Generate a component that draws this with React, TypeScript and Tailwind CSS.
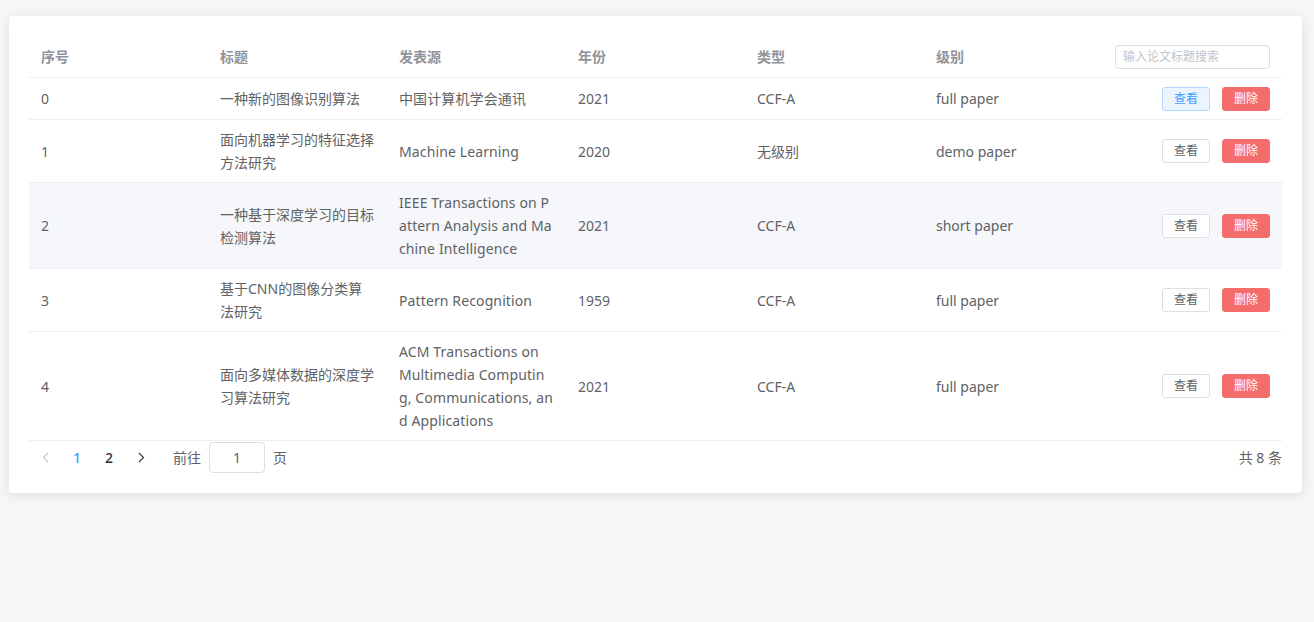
import React from "react";

const rows = [
  { id: 0, title: "一种新的图像识别算法", source: "中国计算机学会通讯", year: "2021", type: "CCF-A", level: "full paper" },
  { id: 1, title: "面向机器学习的特征选择方法研究", source: "Machine Learning", year: "2020", type: "无级别", level: "demo paper" },
  { id: 2, title: "一种基于深度学习的目标检测算法", source: "IEEE Transactions on Pattern Analysis and Machine Intelligence", year: "2021", type: "CCF-A", level: "short paper" },
  { id: 3, title: "基于CNN的图像分类算法研究", source: "Pattern Recognition", year: "1959", type: "CCF-A", level: "full paper" },
  { id: 4, title: "面向多媒体数据的深度学习算法研究", source: "ACM Transactions on Multimedia Computing, Communications, and Applications", year: "2021", type: "CCF-A", level: "full paper" },
];

const headers = ["序号", "标题", "发表源", "年份", "类型", "级别"];

const Chevron = ({ dir, color }: { dir: "left" | "right"; color: string }) => (
  <svg width="7" height="11" viewBox="0 0 7 11" fill="none">
    <path
      d={dir === "left" ? "M6 1 L1.5 5.5 L6 10" : "M1 1 L5.5 5.5 L1 10"}
      stroke={color}
      strokeWidth="1.1"
    />
  </svg>
);

export default function App() {
  return (
    <div
      className="min-h-[622px] bg-[#f5f6f7] pt-4 px-[9px] pb-4 text-[14px] text-[#606266]"
      style={{ fontFamily: '"Noto Sans", "Noto Sans CJK SC", sans-serif' }}
    >
      <div className="w-[1293px] rounded bg-white p-5 shadow-[0_2px_12px_0_rgba(0,0,0,0.1)]">
        <table className="w-[1253px] table-fixed border-collapse">
          <colgroup>
            {Array.from({ length: 7 }).map((_, i) => (
              <col key={i} className="w-[179px]" />
            ))}
          </colgroup>
          <thead>
            <tr className="border-b border-[#ebeef5]">
              {headers.map((h) => (
                <th key={h} className="px-3 py-2 text-left font-bold text-[#909399] leading-[25px]">
                  {h}
                </th>
              ))}
              <th className="px-3 py-2">
                <div className="flex h-[25px] items-center justify-end">
                  <input
                    placeholder="输入论文标题搜索"
                    className="h-6 w-[155px] rounded border border-[#dcdfe6] px-[7px] text-[12px] font-normal text-[#606266] outline-none placeholder:text-[#c0c4cc]"
                  />
                </div>
              </th>
            </tr>
          </thead>
          <tbody>
            {rows.map((r) => (
              <tr
                key={r.id}
                className={`border-b border-[#ebeef5] ${r.id === 2 ? "bg-[#f5f7fa]" : ""}`}
              >
                <td className="px-3 py-2 align-middle leading-[23px]">{r.id}</td>
                <td className="px-3 py-2 align-middle leading-[23px] break-all">{r.title}</td>
                <td className="px-3 py-2 align-middle leading-[23px] break-all tracking-[0.12px]">{r.source}</td>
                <td className="px-3 py-2 align-middle leading-[23px]">{r.year}</td>
                <td className="px-3 py-2 align-middle leading-[23px]">{r.type}</td>
                <td className="px-3 py-2 align-middle leading-[23px]">{r.level}</td>
                <td className="px-3 py-2 align-middle">
                  <div className="flex h-[25px] items-center justify-end gap-3">
                    <button
                      className={`h-6 w-12 rounded-[3px] border text-[12px] leading-none ${
                        r.id === 0
                          ? "border-[#b3d8ff] bg-[#ecf5ff] text-[#409eff]"
                          : "border-[#dcdfe6] bg-white text-[#606266]"
                      }`}
                    >
                      查看
                    </button>
                    <button className="h-6 w-12 rounded-[3px] border border-[#f56c6c] bg-[#f56c6c] text-[12px] leading-none text-white">
                      删除
                    </button>
                  </div>
                </td>
              </tr>
            ))}
          </tbody>
        </table>

        {/* pagination */}
        <div className="flex h-8 w-[1253px] items-center">
          <div className="flex w-8 items-center justify-center">
            <Chevron dir="left" color="#c0c4cc" />
          </div>
          <div className="flex w-8 items-center justify-center font-medium text-[#409eff]">1</div>
          <div className="flex w-8 items-center justify-center font-medium text-[#303133]">2</div>
          <div className="flex w-8 items-center justify-center">
            <Chevron dir="right" color="#303133" />
          </div>
          <span className="ml-4">前往</span>
          <input
            defaultValue="1"
            className="mx-2 h-[31px] w-14 rounded border border-[#dcdfe6] text-center text-[#606266] outline-none"
          />
          <span>页</span>
          <span className="ml-auto">共 8 条</span>
        </div>
      </div>
    </div>
  );
}
